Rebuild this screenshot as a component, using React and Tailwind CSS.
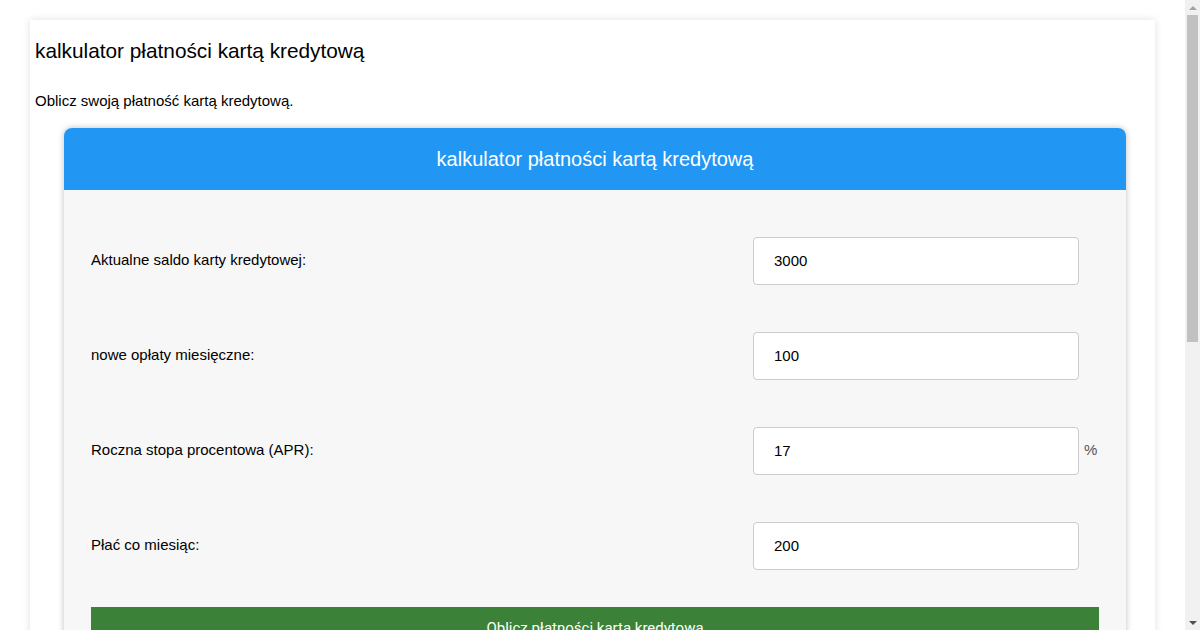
import React from 'react';

const fields = [
  { label: 'Aktualne saldo karty kredytowej:', value: '3000', unit: '' },
  { label: 'nowe opłaty miesięczne:', value: '100', unit: '' },
  { label: 'Roczna stopa procentowa (APR):', value: '17', unit: '%' },
  { label: 'Płać co miesiąc:', value: '200', unit: '' },
];

const App = () => {
  return (
    <div className="flex h-[630px] overflow-hidden bg-white font-['Liberation_Sans',Arial,sans-serif] text-black">
      <div className="flex-1 min-w-0 pt-[20px] px-[30px]">
        <div className="bg-white shadow-[0_0_8px_rgba(0,0,0,0.12)] px-[5px] pb-[40px]">
          <h1 className="text-[20.8px] leading-[26px] pt-[18px]">kalkulator płatności kartą kredytową</h1>
          <p className="text-[15px] leading-[18px] mt-[28px]">Oblicz swoją płatność kartą kredytową.</p>

          {/* Calculator card */}
          <div className="ml-[29px] mr-[24px] mt-[18px] rounded-t-[8px] bg-[#f7f7f7] shadow-[0_0_6px_rgba(0,0,0,0.25)]">
            <div className="h-[62px] rounded-t-[8px] bg-[#2196f3] flex items-center justify-center text-white text-[20px]">
              kalkulator płatności kartą kredytową
            </div>
            <div className="px-[27px] pt-[23px] pb-[40px]">
              {fields.map((f) => (
                <div key={f.label} className="h-[95px] flex items-center">
                  <label className="flex-1 text-[15px]">{f.label}</label>
                  <input
                    type="text"
                    defaultValue={f.value}
                    className="w-[326px] h-[48px] bg-white border border-[#cccccc] rounded-[4px] px-[20px] text-[15px] text-black outline-none font-['Liberation_Sans',Arial,sans-serif]"
                  />
                  <span className="w-[20px] pl-[5px] text-[15px] text-[#555]">{f.unit}</span>
                </div>
              ))}
              <button className="mt-[14px] w-full h-[42px] bg-[#3b8238] text-white text-[15px] font-['Roboto',sans-serif]">
                Oblicz płatności kartą kredytową
              </button>
            </div>
          </div>
        </div>
      </div>

      {/* Scrollbar */}
      <div className="w-[15px] shrink-0 bg-[#f1f1f1] flex flex-col items-center">
        <div className="h-[15px] flex items-center justify-center">
          <div className="w-0 h-0 border-l-[4px] border-r-[4px] border-b-[4px] border-l-transparent border-r-transparent border-b-[#a3a3a3]" />
        </div>
        <div className="w-[11px] h-[327px] bg-[#c1c1c1]" />
        <div className="flex-1" />
        <div className="h-[15px] flex items-center justify-center">
          <div className="w-0 h-0 border-l-[4px] border-r-[4px] border-t-[4px] border-l-transparent border-r-transparent border-t-[#505050]" />
        </div>
      </div>
    </div>
  );
};

export default App;
